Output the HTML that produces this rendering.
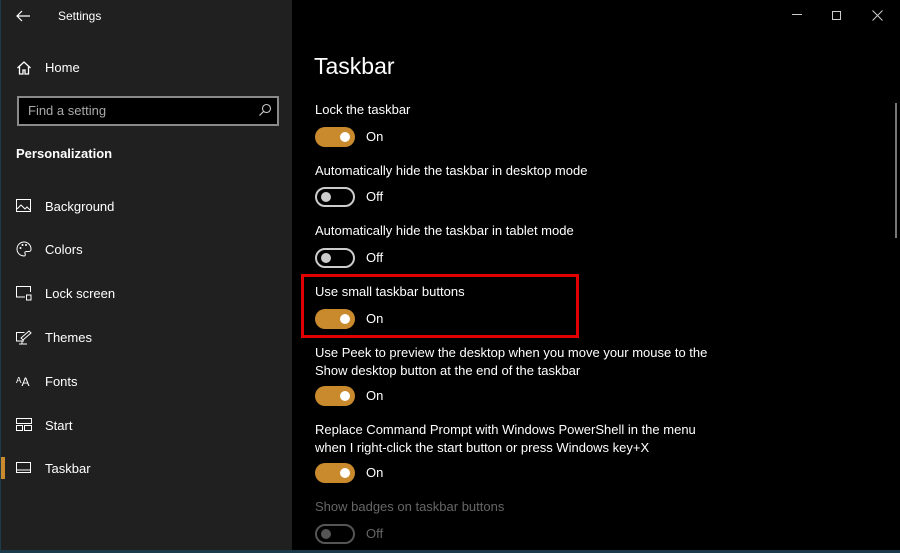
<!DOCTYPE html>
<html><head><meta charset="utf-8"><style>
*{margin:0;padding:0;box-sizing:border-box}
body{width:900px;height:553px;background:#000;font-family:"Segoe UI","Liberation Sans",sans-serif;color:#fff;position:relative;overflow:hidden}
#side{position:absolute;left:0;top:0;width:292px;height:553px;background:#202020;border-left:1px solid #1b3a4a}
.a{position:absolute;white-space:nowrap}
.t{font-size:13px}
.nav{position:absolute;left:44px;font-size:13px;color:#fff}
.ic{position:absolute;left:15px}
.tg{position:absolute;left:315px;width:40px;height:20px;border-radius:10px}
.on{background:#c98a2e}
.on::after{content:"";position:absolute;right:5px;top:5px;width:10px;height:10px;border-radius:50%;background:#fff}
.off{border:2px solid #ccc}
.off::after{content:"";position:absolute;left:4px;top:3px;width:10px;height:10px;border-radius:50%;background:#ccc}
.dis{border-color:#555}.dis::after{background:#555}
.st{position:absolute;left:366px;font-size:13px}
</style></head><body>
<div id="side">
<svg class="a" style="left:14px;top:9px" width="16" height="14" viewBox="0 0 16 14"><path d="M15 7H2M7 2L2 7l5 5" stroke="#fff" stroke-width="1.2" fill="none"/></svg>
<div class="a" style="left:57px;top:9px;font-size:12px">Settings</div>
<svg class="ic" style="top:60px" width="16" height="16" viewBox="0 0 16 16"><path d="M1.5 8L8 2l6.5 6M3.5 6.5V14h3.5v-4h2v4h3.5V6.5" stroke="#fff" stroke-width="1.3" fill="none"/></svg>
<div class="nav" style="top:60px">Home</div>
<div class="a" style="left:16px;top:96px;width:262px;height:30px;border:2px solid #8a8a8a;background:#000"></div>
<div class="a" style="left:27px;top:103px;font-size:13px;color:#aaa">Find a setting</div>
<svg class="a" style="left:257px;top:103px" width="14" height="14" viewBox="0 0 14 14"><circle cx="8.5" cy="5.5" r="4" stroke="#ccc" fill="none" stroke-width="1.1"/><path d="M5.5 8.5L1.5 12.5" stroke="#ccc" stroke-width="1.2"/></svg>
<div class="a" style="left:15px;top:146px;font-size:13px;font-weight:bold">Personalization</div>
<svg class="ic" style="top:199px" width="16" height="14" viewBox="0 0 16 14"><rect x="0.5" y="0.5" width="14" height="12" stroke="#fff" fill="none"/><path d="M1 10l4-4 4 4 2-2 3 3" stroke="#fff" fill="none"/></svg>
<div class="nav" style="top:199px">Background</div>
<svg class="ic" style="top:241px" width="16" height="16" viewBox="0 0 16 16"><path d="M8 1a7 7 0 1 0 0 14c1.5 0 1.5-1.5 1-2.5s0-2 1.5-2H13a2 2 0 0 0 2-2A7 7 0 0 0 8 1z" stroke="#fff" fill="none"/><circle cx="4.5" cy="7" r="1" fill="#fff"/><circle cx="6.5" cy="4" r="1" fill="#fff"/><circle cx="10" cy="4" r="1" fill="#fff"/></svg>
<div class="nav" style="top:242px">Colors</div>
<svg class="ic" style="top:286px" width="16" height="15" viewBox="0 0 16 15"><path d="M9 11H0.5V0.5h14V6" stroke="#fff" fill="none"/><rect x="10.5" y="9" width="4.5" height="5" stroke="#fff" fill="none"/></svg>
<div class="nav" style="top:286px">Lock screen</div>
<svg class="ic" style="top:330px" width="16" height="15" viewBox="0 0 16 15"><path d="M8 11H0.5V2.5h8M3 14h8M6 11v3" stroke="#fff" fill="none"/><path d="M5 8l8-7 2 2-8 7z" stroke="#fff" fill="none"/></svg>
<div class="nav" style="top:330px">Themes</div>
<div class="a" style="left:15px;top:375px;font-size:12px">ᴬA</div>
<div class="nav" style="top:374px">Fonts</div>
<svg class="ic" style="top:418px" width="16" height="14" viewBox="0 0 16 14"><rect x="0.5" y="0.5" width="15" height="5" stroke="#fff" fill="none"/><rect x="0.5" y="7.5" width="6" height="5" stroke="#fff" fill="none"/><rect x="8.5" y="7.5" width="7" height="5" stroke="#fff" fill="none"/></svg>
<div class="nav" style="top:418px">Start</div>
<div class="a" style="left:0;top:457px;width:4px;height:22px;background:#c98a2e"></div>
<svg class="ic" style="top:462px" width="16" height="12" viewBox="0 0 16 12"><rect x="0.5" y="0.5" width="14" height="10" stroke="#fff" fill="none"/><path d="M1 8h13" stroke="#fff"/></svg>
<div class="nav" style="top:461px">Taskbar</div>
</div>
<div class="a" style="left:792px;top:14px;width:10px;height:1px;background:#ccc"></div>
<div class="a" style="left:832px;top:11px;width:9px;height:9px;border:1px solid #ccc"></div>
<svg class="a" style="left:872px;top:10px" width="11" height="11" viewBox="0 0 11 11"><path d="M0.5 0.5l10 10M10.5 0.5l-10 10" stroke="#ccc"/></svg>
<div class="a" style="left:895px;top:103px;width:2px;height:135px;background:#777"></div>
<div class="a" style="left:314px;top:53px;font-size:23px">Taskbar</div>
<div class="a t" style="left:315px;top:102px">Lock the taskbar</div>
<div class="tg on" style="top:127px"></div><div class="st" style="top:129px">On</div>
<div class="a t" style="left:315px;top:163px">Automatically hide the taskbar in desktop mode</div>
<div class="tg off" style="top:187px"></div><div class="st" style="top:189px">Off</div>
<div class="a t" style="left:315px;top:223px">Automatically hide the taskbar in tablet mode</div>
<div class="tg off" style="top:248px"></div><div class="st" style="top:250px">Off</div>
<div class="a" style="left:301px;top:274px;width:278px;height:64px;border:3px solid #e00000"></div>
<div class="a t" style="left:315px;top:284px">Use small taskbar buttons</div>
<div class="tg on" style="top:309px"></div><div class="st" style="top:311px">On</div>
<div class="a t" style="left:315px;top:344px;line-height:18px">Use Peek to preview the desktop when you move your mouse to the<br>Show desktop button at the end of the taskbar</div>
<div class="tg on" style="top:386px"></div><div class="st" style="top:388px">On</div>
<div class="a t" style="left:315px;top:421px;line-height:18px">Replace Command Prompt with Windows PowerShell in the menu<br>when I right-click the start button or press Windows key+X</div>
<div class="tg on" style="top:463px"></div><div class="st" style="top:465px">On</div>
<div class="a t" style="left:315px;top:499px;color:#666">Show badges on taskbar buttons</div>
<div class="tg off dis" style="top:524px"></div><div class="st" style="top:526px;color:#666">Off</div>
<div class="a" style="left:0;top:550px;width:900px;height:3px;background:#1b3a4a"></div>
</body></html>
